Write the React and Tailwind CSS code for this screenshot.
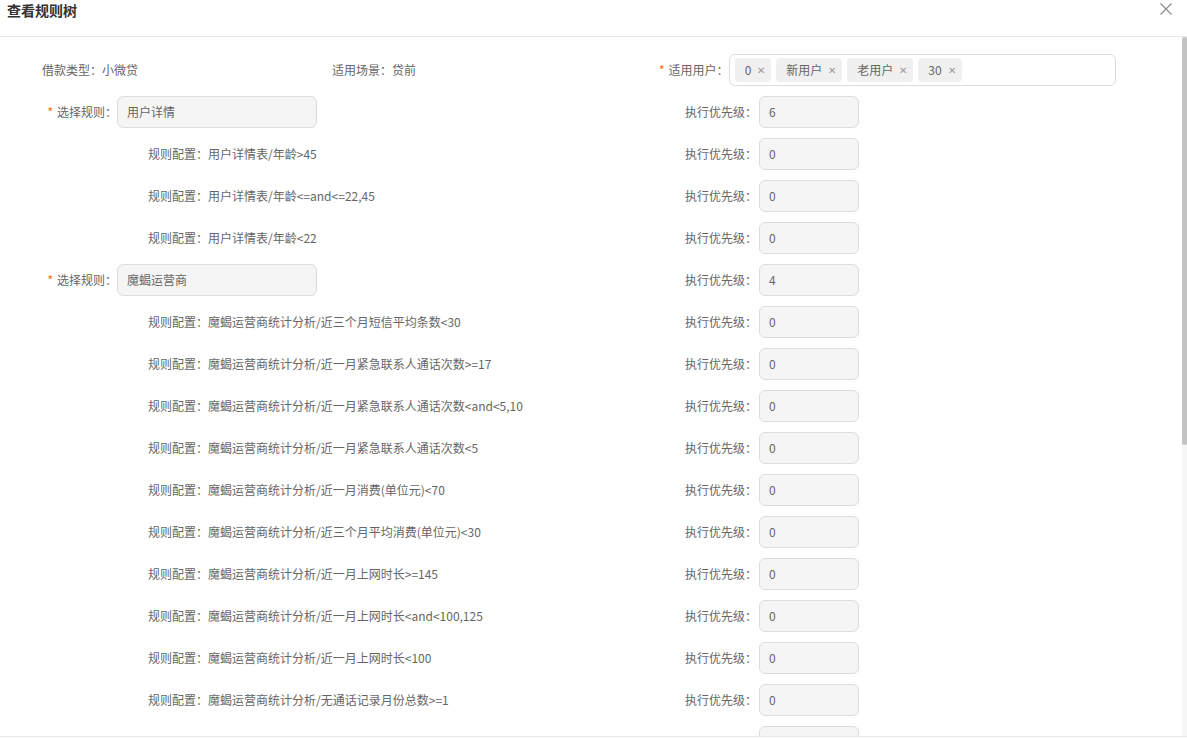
const rules = [
  { type: "select", value: "用户详情", priority: "6" },
  { type: "config", value: "用户详情表/年龄>45", priority: "0" },
  { type: "config", value: "用户详情表/年龄<=and<=22,45", priority: "0" },
  { type: "config", value: "用户详情表/年龄<22", priority: "0" },
  { type: "select", value: "魔蝎运营商", priority: "4" },
  { type: "config", value: "魔蝎运营商统计分析/近三个月短信平均条数<30", priority: "0" },
  { type: "config", value: "魔蝎运营商统计分析/近一月紧急联系人通话次数>=17", priority: "0" },
  { type: "config", value: "魔蝎运营商统计分析/近一月紧急联系人通话次数<and<5,10", priority: "0" },
  { type: "config", value: "魔蝎运营商统计分析/近一月紧急联系人通话次数<5", priority: "0" },
  { type: "config", value: "魔蝎运营商统计分析/近一月消费(单位元)<70", priority: "0" },
  { type: "config", value: "魔蝎运营商统计分析/近三个月平均消费(单位元)<30", priority: "0" },
  { type: "config", value: "魔蝎运营商统计分析/近一月上网时长>=145", priority: "0" },
  { type: "config", value: "魔蝎运营商统计分析/近一月上网时长<and<100,125", priority: "0" },
  { type: "config", value: "魔蝎运营商统计分析/近一月上网时长<100", priority: "0" },
  { type: "config", value: "魔蝎运营商统计分析/无通话记录月份总数>=1", priority: "0" },
  // scrolled below the fold, only the top of its input shows
  { type: "config", value: "", priority: "", hidden: true },
];

const tags = ["0", "新用户", "老用户", "30"];

const inputBox = "flex h-[32px] items-center rounded-[6px] border border-[#dcdcdc] bg-[#f5f5f5] pl-[9px] text-[12px] text-[#666]";

function Star() {
  return <span className="mr-[4px] text-[12px] text-[#f60]">*</span>;
}

function RuleRow({ rule }) {
  return (
    <div className="flex h-[42px] items-center leading-[16px]">
      <div className="flex w-[685px] items-center">
        {rule.type === "select" ? (
          <>
            <div className="flex w-[117px] items-center justify-end text-[#666]">
              <Star />
              <span>选择规则：</span>
            </div>
            <div className={`${inputBox} w-[200px]`}>{rule.value}</div>
          </>
        ) : (
          !rule.hidden && (
            <div className="pl-[148px] text-[#666]">
              规则配置：<span>{rule.value}</span>
            </div>
          )
        )}
      </div>
      <span className="w-[72px] text-[#666]">{rule.hidden ? "" : "执行优先级："}</span>
      <div className={`${inputBox} ml-[2px] w-[100px]`}>{rule.priority}</div>
    </div>
  );
}

export default function App() {
  return (
    <div className="flex h-[738px] w-[1187px] flex-col overflow-hidden bg-white pb-[1px] font-['Noto_Sans_CJK_SC','Liberation_Sans',sans-serif] text-[12px]">
      <div className="flex h-[37px] shrink-0 items-start justify-between border-b border-[#e8e8e8] pl-[7px] pr-[15px] pt-[1px]">
        <h1 className="text-[14px] font-bold leading-[18px] text-[#333]">查看规则树</h1>
        <svg className="mt-[2px]" width="12" height="12" viewBox="0 0 12 12" fill="none" stroke="#8c8c8c" strokeWidth="1.2">
          <path d="M0.5 0.5 L11.5 11.5 M11.5 0.5 L0.5 11.5" />
        </svg>
      </div>

      <div className="flex min-h-0 flex-1 border-b border-[#e8e8e8]">
        <div className="min-w-0 flex-1 overflow-hidden pt-[12px]">
          <div className="flex h-[42px] items-center leading-[16px] text-[#666]">
            <div className="w-[332px] pl-[42px]">借款类型：小微贷</div>
            <div className="w-[327px]">适用场景：贷前</div>
            <div className="flex items-center">
              <Star />
              <span>适用用户：</span>
            </div>
            <div className="flex h-[32px] w-[387px] items-center gap-[5px] rounded-[6px] border border-[#dcdcdc] bg-white px-[5px]">
              {tags.map((tag) => (
                <span key={tag} className="flex h-[24px] items-center gap-[6px] rounded-[4px] bg-[#f0f0f0] pl-[10px] pr-[6px] text-[12px] text-[#666]">
                  {tag}
                  <span className="text-[10px] text-[#999]">✕</span>
                </span>
              ))}
            </div>
          </div>
          {rules.map((rule, i) => (
            <RuleRow key={i} rule={rule} />
          ))}
        </div>
        <div className="flex w-[5px] shrink-0 flex-col bg-[#f7f7f7]">
          <div className="h-[408px] rounded-[2px] bg-[#c4c4c4]" />
        </div>
      </div>
    </div>
  );
}
